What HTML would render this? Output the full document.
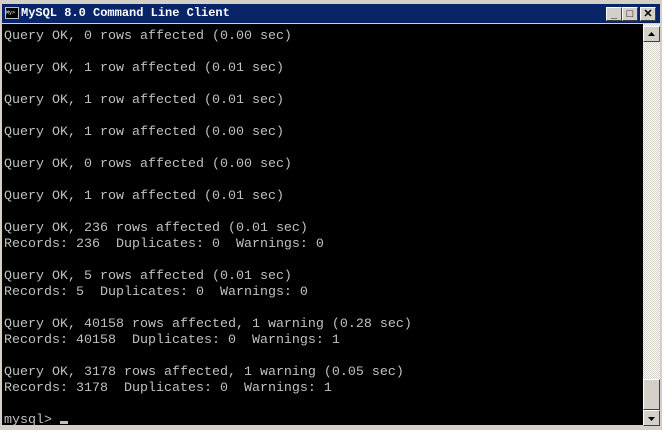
<!DOCTYPE html><html><head><style>
body{margin:0;width:662px;height:425px;overflow:hidden;background:#d4d0c8;position:relative;font-family:"Liberation Mono",monospace}
.tb{position:absolute;left:2px;top:4px;width:658px;height:19px;background:#0a246a}
.tt{position:absolute;left:19px;top:2px;color:#fff;font-weight:bold;font-size:12px;line-height:15px}
.ic{position:absolute;left:3px;top:3px;width:14px;height:12px;background:#000;border:1px solid #c0c0c0;box-sizing:border-box;color:#fff;font-size:5px;line-height:10px}
.btn{position:absolute;top:3px;width:16px;height:14px;background:#d4d0c8;border:1px solid;border-color:#fff #404040 #404040 #fff;box-sizing:border-box;font:bold 11px "Liberation Sans",sans-serif;text-align:center;line-height:12px;color:#000}
.con{position:absolute;left:2px;top:24px;width:641px;height:401px;background:#000}
pre{margin:0;position:absolute;left:2px;top:5px;color:#c0c0c0;font-size:13.33px;line-height:16px}
.sb{position:absolute;left:643px;top:24px;width:17px;height:401px;background:repeating-conic-gradient(#d4d0c8 0 25%,#fff 0 50%) 0 0/2px 2px}
.sbtn{position:absolute;left:0;width:17px;height:16px;background:#d4d0c8;border:1px solid;border-color:#fff #404040 #404040 #fff;box-sizing:border-box}
.cur{display:inline-block;width:8px;height:3px;background:#c0c0c0;vertical-align:-1px}
</style></head><body>
<div class="tb"><div class="ic">My&gt;</div><div class="tt">MySQL 8.0 Command Line Client</div>
<div class="btn" style="left:604px">_</div><div class="btn" style="left:620px">□</div><div class="btn" style="left:638px">✕</div></div>
<div class="con"><pre>Query OK, 0 rows affected (0.00 sec)

Query OK, 1 row affected (0.01 sec)

Query OK, 1 row affected (0.01 sec)

Query OK, 1 row affected (0.00 sec)

Query OK, 0 rows affected (0.00 sec)

Query OK, 1 row affected (0.01 sec)

Query OK, 236 rows affected (0.01 sec)
Records: 236  Duplicates: 0  Warnings: 0

Query OK, 5 rows affected (0.01 sec)
Records: 5  Duplicates: 0  Warnings: 0

Query OK, 40158 rows affected, 1 warning (0.28 sec)
Records: 40158  Duplicates: 0  Warnings: 1

Query OK, 3178 rows affected, 1 warning (0.05 sec)
Records: 3178  Duplicates: 0  Warnings: 1

mysql&gt; <span class="cur"></span></pre></div>
<div class="sb"><div class="sbtn" style="top:2px"><svg width="15" height="14"><path d="M4 9h7L7.5 5z" fill="#000"/></svg></div>
<div class="sbtn" style="top:355px;height:31px"></div>
<div class="sbtn" style="top:386px"><svg width="15" height="14"><path d="M4 6h7L7.5 10z" fill="#000"/></svg></div></div>
</body></html>
